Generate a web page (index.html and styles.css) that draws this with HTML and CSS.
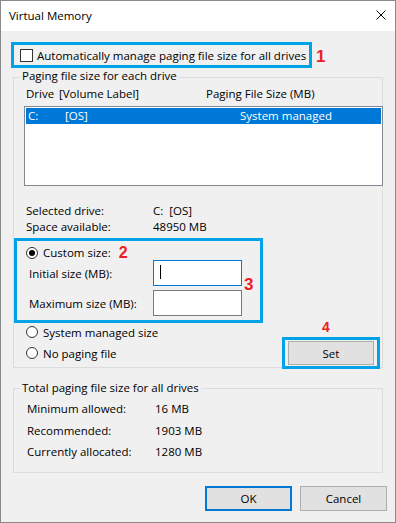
FILE: index.html
```html
<!DOCTYPE html>
<html>
<head>
<meta charset="utf-8">
<link rel="stylesheet" href="styles.css">
</head>
<body>
<div class="window">
  <div class="titlebar">
    <span class="title">Virtual Memory</span>
    <svg class="close" width="10" height="10" viewBox="0 0 10 10"><path d="M0.5 0.5L9.5 9.5M9.5 0.5L0.5 9.5" stroke="#000" stroke-width="1" fill="none"/></svg>
  </div>
  <div class="content">
    <div class="auto-row">
      <div class="hl hl-auto"><span class="check"></span><span>Automatically manage paging file size for all drives</span></div>
      <span class="num num1">1</span>
    </div>

    <div class="group group-drive">
      <div class="legend">Paging file size for each drive</div>
      <div class="list-head"><span class="h-drive">Drive</span><span class="h-label">[Volume Label]</span><span>Paging File Size (MB)</span></div>
      <div class="listbox">
        <div class="list-row"><span class="c-drive">C:</span><span class="c-label">[OS]</span><span>System managed</span></div>
      </div>
      <div class="info">
        <div class="info-row"><span class="info-label">Selected drive:</span><span>C:&nbsp; [OS]</span></div>
        <div class="info-row"><span class="info-label">Space available:</span><span>48950 MB</span></div>
      </div>
      <div class="lower">
        <div class="left-col">
          <div class="hl hl-custom">
            <div class="radio-row custom-row"><span class="radio on"></span><span>Custom size:</span><span class="num num2">2</span></div>
            <div class="size-row"><span class="size-label">Initial size (MB):</span><span class="input focus"><span class="caret"></span></span></div>
            <div class="size-row second"><span class="size-label">Maximum size (MB):</span><span class="input"></span></div>
            <span class="num num3">3</span>
          </div>
          <div class="radio-row plain-row first"><span class="radio"></span><span>System managed size</span></div>
          <div class="radio-row plain-row"><span class="radio"></span><span>No paging file</span></div>
        </div>
        <div class="right-col">
          <div class="num num4">4</div>
          <div class="hl hl-set"><div class="btn btn-set">Set</div></div>
        </div>
      </div>
    </div>

    <div class="group group-total">
      <div class="legend legend-total">Total paging file size for all drives</div>
      <div class="totals">
        <div class="total-row"><span class="total-label">Minimum allowed:</span><span>16 MB</span></div>
        <div class="total-row"><span class="total-label">Recommended:</span><span>1903 MB</span></div>
        <div class="total-row"><span class="total-label">Currently allocated:</span><span>1280 MB</span></div>
      </div>
    </div>

    <div class="buttons">
      <div class="btn btn-dlg btn-ok">OK</div>
      <div class="btn btn-dlg">Cancel</div>
    </div>
  </div>
</div>
</body>
</html>
```
FILE: styles.css
```css
* { box-sizing: border-box; }
body {
  margin: 0;
  font-family: "Open Sans", "Noto Sans", sans-serif;
  font-size: 11.5px;
  color: #000;
}
.window {
  width: 396px;
  height: 523px;
  border: 1px solid #8a8a8a;
  background: #f0f0f0;
  overflow: hidden;
}
.titlebar {
  height: 30px;
  background: #fff;
  display: flex;
  justify-content: space-between;
  align-items: flex-start;
  padding: 7px 9px 0 8px;
  line-height: 15px;
}
.close { margin-top: 2px; display: block; }
.content { padding: 0 12px; }

.hl { border: 3px solid #00a2e8; }
.num {
  color: #ed1c24;
  font-family: "Liberation Sans", Arial, sans-serif;
  font-weight: bold;
}

.auto-row {
  display: flex;
  align-items: flex-start;
  margin-top: 11px;
  margin-left: -2px;
  line-height: 15px;
}
.hl-auto {
  width: 301px;
  height: 26px;
  display: flex;
  align-items: center;
  padding-left: 6px;
  white-space: nowrap;
}
.check {
  width: 13px;
  height: 13px;
  border: 1px solid #333;
  background: #fff;
  margin-right: 4px;
  flex: none;
}
.num1 { font-size: 17px; line-height: 17px; margin: 6px 0 0 4px; }

.group {
  border: 1px solid #dcdcdc;
  position: relative;
}
.group-drive { margin-top: 9px; height: 291px; }
.legend {
  margin: -10px 0 0 6px;
  padding: 0 2px;
  background: #f0f0f0;
  width: max-content;
  line-height: 15px;
}
.list-head {
  display: flex;
  margin-top: 3px;
  padding-left: 12px;
  line-height: 15px;
}
.h-drive { width: 33px; }
.h-label { width: 147px; }
.listbox {
  margin: 5px 0 0 10px;
  width: 359px;
  height: 80px;
  border: 1px solid #828790;
  background: #fff;
  padding: 1px;
}
.list-row {
  height: 16px;
  line-height: 16px;
  background: #0078d7;
  color: #fff;
  display: flex;
  padding-left: 2px;
}
.c-drive { width: 37px; }
.c-label { width: 175px; }

.info { margin-top: 17px; padding-left: 12px; line-height: 16px; }
.info-row { display: flex; }
.info-label { width: 127px; }

.lower { display: flex; margin-top: 3px; }
.left-col { display: flex; flex-direction: column; width: 249px; }
.hl-custom {
  position: relative;
  width: 249px;
  height: 85px;
  padding: 4px 0 0 9px;
}
.radio-row { display: flex; align-items: center; line-height: 15px; }
.custom-row { height: 15px; }
.radio {
  width: 12px;
  height: 12px;
  border: 1px solid #333;
  border-radius: 50%;
  background: #fff;
  margin-right: 5px;
  flex: none;
  display: flex;
  align-items: center;
  justify-content: center;
}
.radio.on::after {
  content: "";
  width: 6px;
  height: 6px;
  border-radius: 50%;
  background: #000;
}
.num2 { font-size: 16px; line-height: 16px; margin-left: 8px; }
.size-row {
  display: flex;
  align-items: center;
  height: 26px;
  padding-left: 3px;
  line-height: 15px;
}
.size-row.second { margin-top: 4px; }
.size-label { width: 124px; }
.input {
  width: 89px;
  height: 26px;
  border: 1px solid #7a7a7a;
  background: #fff;
  position: relative;
}
.input.focus { border-color: #0078d7; }
.caret {
  position: absolute;
  left: 6px;
  top: 4px;
  width: 1px;
  height: 14px;
  background: #000;
}
.num3 {
  position: absolute;
  left: 227px;
  top: 35px;
  font-size: 17px;
  line-height: 17px;
}
.plain-row { height: 20px; margin-top: 1px; padding-left: 12px; }
.plain-row.first { margin-top: -1px; }

.right-col { margin-left: 19px; padding-top: 82px; }
.num4 { font-size: 14px; line-height: 14px; padding-left: 40px; }
.hl-set {
  margin-top: 3px;
  width: 98px;
  height: 32px;
  padding: 1px 3px;
}
.btn {
  background: #e1e1e1;
  border: 1px solid #adadad;
  display: flex;
  align-items: center;
  justify-content: center;
  line-height: 15px;
}
.btn-set { height: 24px; }

.group-total { margin-top: 20px; height: 85px; }
.legend-total { margin-top: -9px; }
.totals { margin-top: 3px; padding-left: 13px; line-height: 21.5px; }
.total-row { display: flex; }
.total-label { width: 128px; }

.buttons {
  display: flex;
  gap: 8px;
  margin-top: 13px;
  padding-left: 192px;
}
.btn-dlg { width: 87px; height: 25px; flex: none; }
.btn-ok { border: 2px solid #0078d7; }
```
